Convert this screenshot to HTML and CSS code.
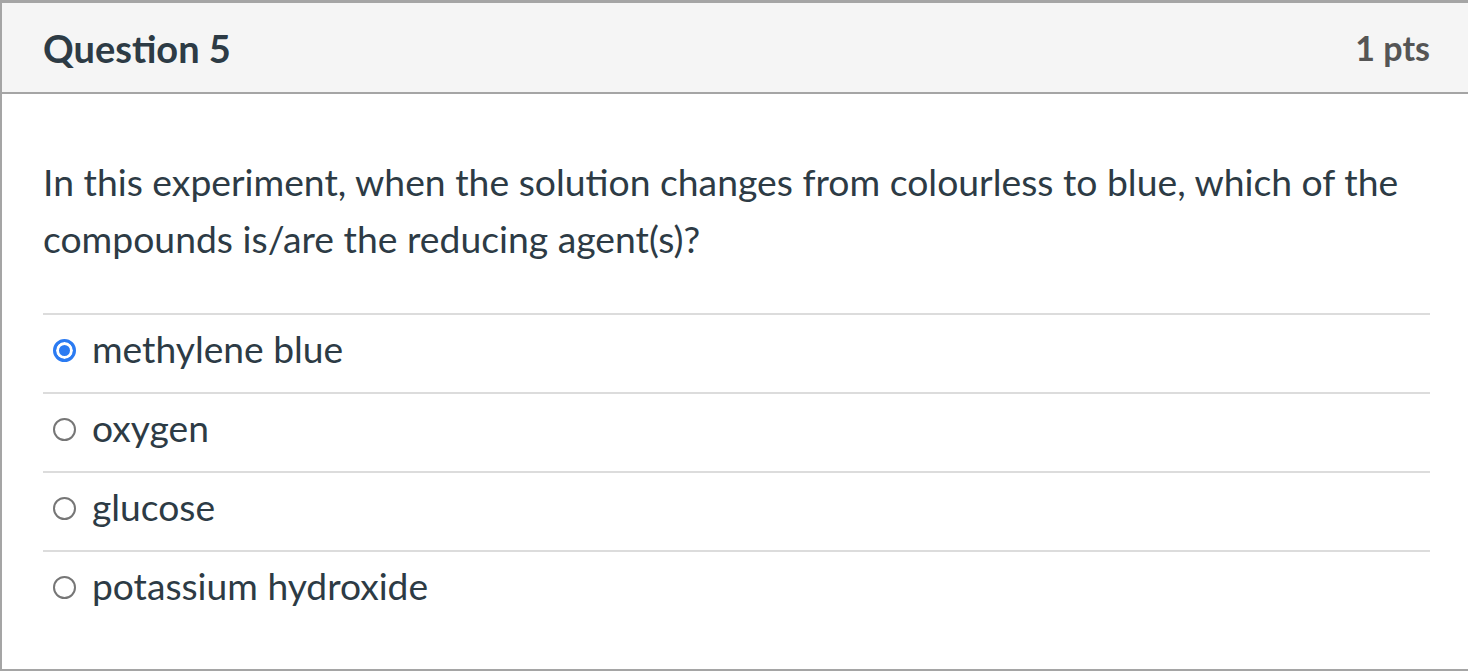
FILE: index.html
```html
<!DOCTYPE html>
<html>
<head>
<meta charset="utf-8">
<link rel="stylesheet" href="styles.css">
</head>
<body>
<div class="question">
  <div class="q-header">
    <h2 class="q-title">Question 5</h2>
    <div class="q-points">1 pts</div>
  </div>
  <div class="q-body">
    <p class="q-text">In this experiment, when the solution changes from colourless to blue, which of the compounds is/are the reducing agent(s)?</p>
    <div class="answers">
      <label class="answer"><span class="radio checked"></span><span class="a-text">methylene blue</span></label>
      <label class="answer"><span class="radio"></span><span class="a-text">oxygen</span></label>
      <label class="answer"><span class="radio"></span><span class="a-text">glucose</span></label>
      <label class="answer"><span class="radio"></span><span class="a-text">potassium hydroxide</span></label>
    </div>
  </div>
</div>
</body>
</html>
```
FILE: styles.css
```css
html, body {
  margin: 0;
  padding: 0;
  background: #fff;
  overflow: hidden;
}
body {
  font-family: Lato, "Noto Sans", sans-serif;
  color: #2d3b45;
}
.question {
  width: 1473px;
  box-sizing: border-box;
  height: 671px;
  border: 2px solid #a5a5a5;
  border-top-width: 3px;
}
.q-header {
  display: flex;
  justify-content: space-between;
  align-items: center;
  background: #f5f5f5;
  height: 89px;
  padding: 0 41px;
  border-bottom: 2px solid #a5a5a5;
}
.q-title {
  margin: 0;
  font-size: 38px;
  font-weight: 700;
  color: #2d3b45;
}
.q-points {
  font-size: 34px;
  font-weight: 700;
  color: #555;
}
.q-body {
  padding: 0 41px;
}
.q-text {
  margin: 0;
  padding-top: 59px;
  font-size: 37.3px;
  line-height: 57px;
}
.answers {
  margin-top: 46px;
}
.answer {
  display: flex;
  align-items: center;
  box-sizing: border-box;
  height: 79px;
  padding-bottom: 10px;
  border-top: 2px solid #dcdcdc;
  font-size: 37.2px;
}
.radio {
  width: 19px;
  height: 19px;
  border: 2px solid #767676;
  border-radius: 50%;
  margin-left: 10px;
  margin-right: 16px;
  margin-top: 4px;
  box-sizing: content-box;
  flex: none;
}
.radio.checked {
  border: 3px solid #2b7bf2;
  width: 17px;
  height: 17px;
  background: #2b7bf2;
  box-shadow: inset 0 0 0 3px #fff;
}
```
